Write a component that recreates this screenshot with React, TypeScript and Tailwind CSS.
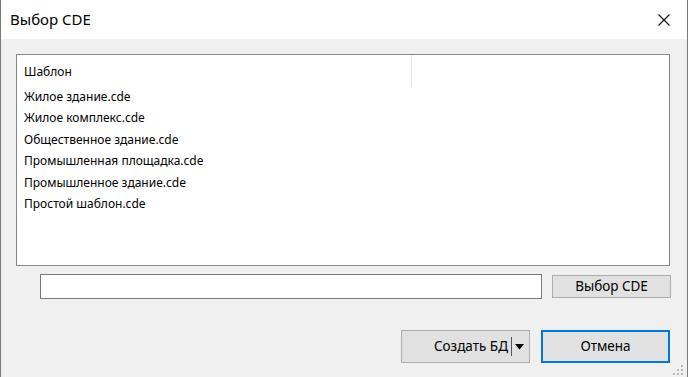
const ITEMS = [
  "Жилое здание.cde",
  "Жилое комплекс.cde",
  "Общественное здание.cde",
  "Промышленная площадка.cde",
  "Промышленное здание.cde",
  "Простой шаблон.cde",
];

const FONT = { fontFamily: '"Noto Sans", "Open Sans", sans-serif' };

function CloseIcon() {
  return (
    <svg width="12" height="12" viewBox="0 0 12 12" aria-hidden>
      <path d="M0.5 0.5 L11.5 11.5 M11.5 0.5 L0.5 11.5" stroke="#111" strokeWidth="1.1" fill="none" />
    </svg>
  );
}

function Grip() {
  return (
    <svg width="12" height="12" viewBox="0 0 12 12" aria-hidden className="absolute bottom-[1px] right-[3px]">
      <g fill="#b8b8b8">
        <rect x="9" y="1" width="2" height="2" />
        <rect x="5" y="5" width="2" height="2" />
        <rect x="9" y="5" width="2" height="2" />
        <rect x="1" y="9" width="2" height="2" />
        <rect x="5" y="9" width="2" height="2" />
        <rect x="9" y="9" width="2" height="2" />
      </g>
    </svg>
  );
}

export default function App() {
  return (
    <div
      style={FONT}
      className="relative flex h-[377px] w-[688px] flex-col overflow-hidden border-x border-[#7a7a7a] bg-[#f0f0f0] text-[12px] text-black"
    >
      {/* Title bar */}
      <div className="flex h-[39px] items-center justify-between bg-white pl-[9px] pr-[17px]">
        <span className="text-[15px] leading-none">Выбор CDE</span>
        <CloseIcon />
      </div>

      {/* Template list */}
      <div className="ml-[15px] mt-[15px] h-[212px] w-[654px] border border-[#828790] bg-white">
        <div className="flex h-[32px]">
          <div className="flex w-[395px] items-center border-r border-[#e5e5e5] pl-[7px] pt-[1px]">
            Шаблон
          </div>
        </div>
        <ul className="-mt-[1px] pl-[7px]">
          {ITEMS.map((item) => (
            <li key={item} className="h-[21.4px] leading-[21px]">
              {item}
            </li>
          ))}
        </ul>
      </div>

      {/* Path row */}
      <div className="mt-[8px] flex items-center gap-[10px] pl-[39px]">
        <div className="h-[25px] w-[502px] border border-[#7a7a7a] bg-white" />
        <button className="h-[23px] w-[119px] border border-[#adadad] bg-[#e1e1e1] text-[13.5px] leading-none">
          Выбор CDE
        </button>
      </div>

      {/* Bottom buttons */}
      <div className="mt-[31px] flex gap-[11px] pl-[400px] text-[13.5px]">
        <button className="flex h-[33px] w-[129px] items-center justify-end border border-[#adadad] bg-[#e1e1e1] pr-[5px]">
          <span className="leading-none">Создать БД</span>
          <span className="ml-[3px] h-[19px] w-px bg-[#555]" />
          <svg width="9" height="6" viewBox="0 0 9 6" className="ml-[3px]" aria-hidden>
            <path d="M0 0 H9 L4.5 5.5 Z" fill="#000" />
          </svg>
        </button>
        <button className="h-[33px] w-[129px] border-2 border-[#0078d7] bg-[#e1e1e1] leading-none">
          Отмена
        </button>
      </div>

      <Grip />
    </div>
  );
}
